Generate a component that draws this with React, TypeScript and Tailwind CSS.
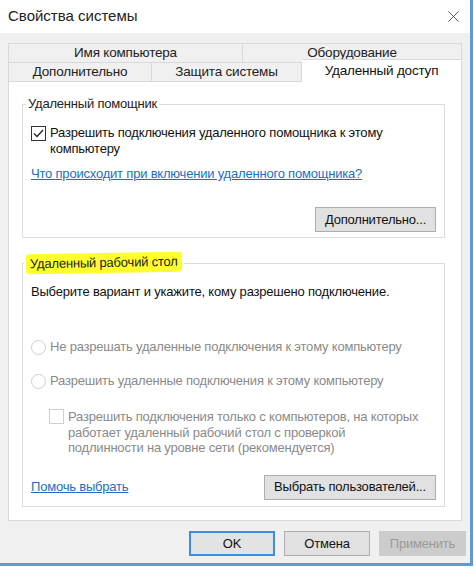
import { X } from "lucide-react";

const font = "font-['Liberation_Sans',Arial,sans-serif]";

function Btn({
  children,
  className = "",
  disabled = false,
  primary = false,
}: {
  children: React.ReactNode;
  className?: string;
  disabled?: boolean;
  primary?: boolean;
}) {
  return (
    <button
      className={`h-[25px] flex items-center justify-center text-[13px] tracking-[-0.2px] ${
        primary
          ? "border-2 border-[#3c8ddb] bg-[#e3e3e3] text-[#111]"
          : disabled
          ? "border border-[#cccccc] bg-[#cccccc] text-[#9a9a9a]"
          : "border border-[#adadad] bg-[#e1e1e1] text-[#111]"
      } ${className}`}
    >
      {children}
    </button>
  );
}

function Radio() {
  return (
    <span className="w-[15px] h-[15px] rounded-full border border-[#cfcfcf] bg-white shrink-0" />
  );
}

export default function App() {
  return (
    <div className={`w-[474px] h-[569px] bg-white ${font} text-[13px] tracking-[-0.2px] text-[#111]`}>
      <div className="w-[473px] h-[566px] flex flex-col border-r-[3px] border-b-[3px] border-[#5c9bd8]">
        {/* title bar */}
        <div className="h-[33px] bg-white flex items-center justify-between pl-[8px] pr-[7px]">
          <span className="text-[15px] tracking-normal text-[#222]">Свойства системы</span>
          <X size={19} strokeWidth={1} className="text-[#333]" />
        </div>

        {/* body */}
        <div className="flex-1 bg-[#f0f0f0] pt-[10px] pl-[8px] pr-[8px] flex flex-col">
          {/* tabs */}
          <div className="flex h-[19px] text-[#222] text-[13.5px]">
            <div className="w-[235px] border border-b-0 border-[#d9d9d9] flex items-center justify-center">
              Имя компьютера
            </div>
            <div className="w-[219px] border border-l-0 border-b-0 border-[#d9d9d9] flex items-center justify-center">
              Оборудование
            </div>
          </div>
          <div className="flex h-[20px] items-end text-[#222] text-[13.5px]">
            <div className="w-[144px] h-[20px] border border-[#d9d9d9] flex items-center justify-center">
              Дополнительно
            </div>
            <div className="w-[150px] h-[20px] border border-l-0 border-[#d9d9d9] flex items-center justify-center">
              Защита системы
            </div>
            <div className="w-[160px] h-[23px] -mt-[3px] bg-white border border-l-0 border-b-0 border-[#d9d9d9] flex items-start pt-[1px] justify-center text-[#111]">
              Удаленный доступ
            </div>
          </div>

          {/* panel */}
          <div className="w-[454px] h-[439px] bg-white border border-t-0 border-[#d9d9d9] pl-[13px] pr-[16px] pt-[14px] flex flex-col">
            <fieldset className="border border-[#dcdcdc] px-[8px] h-[142px]">
              <legend className="-ml-[5px] px-[2px] leading-[16px] text-[#222]">Удаленный помощник</legend>
              <div className="flex gap-[4px] mt-[13px] leading-[16px]">
                <span className="w-[15px] h-[15px] mt-[1px] border border-[#333] bg-white flex items-center justify-center shrink-0">
                  <svg width="11" height="9" viewBox="0 0 11 9">
                    <path d="M1 4.5 L4 7.5 L10 1" fill="none" stroke="#222" strokeWidth="1.3" />
                  </svg>
                </span>
                <span className="whitespace-nowrap">
                  Разрешить подключения удаленного помощника к этому
                  <br />
                  компьютеру
                </span>
              </div>
              <a className="block mt-[9px] leading-[16px] text-[#1a6fc4] underline">
                Что происходит при включении удаленного помощника?
              </a>
              <div className="flex justify-end mt-[25px]">
                <Btn className="w-[121px]">Дополнительно...</Btn>
              </div>
            </fieldset>

            <fieldset className="border border-[#dcdcdc] px-[8px] mt-[15px] h-[254px]">
              <legend className="-ml-[7px] px-[2px] leading-[16px]">
                <span className="inline-block bg-[#ffff2e] px-[4px] py-[2px] -rotate-1 text-[#222] rounded-[3px]">
                  Удаленный рабочий стол
                </span>
              </legend>
              <p className="mt-[11px] leading-[16px] text-[#111]">
                Выберите вариант и укажите, кому разрешено подключение.
              </p>
              <div className="flex items-center gap-[4px] mt-[39px] text-[#8a8a8a] leading-[16px]">
                <Radio />
                <span>Не разрешать удаленные подключения к этому компьютеру</span>
              </div>
              <div className="flex items-center gap-[4px] mt-[18px] text-[#8a8a8a] leading-[16px]">
                <Radio />
                <span>Разрешить удаленные подключения к этому компьютеру</span>
              </div>
              <div className="flex gap-[4px] mt-[20px] pl-[18px] text-[#8a8a8a] leading-[15.5px]">
                <span className="w-[15px] h-[15px] border border-[#cfcfcf] bg-white shrink-0" />
                <span className="whitespace-nowrap">
                  Разрешить подключения только с компьютеров, на которых
                  <br />
                  работает удаленный рабочий стол с проверкой
                  <br />
                  подлинности на уровне сети (рекомендуется)
                </span>
              </div>
              <div className="flex items-center justify-between mt-[19px]">
                <a className="text-[#1a6fc4] underline leading-[16px]">Помочь выбрать</a>
                <Btn className="w-[172px]">Выбрать пользователей...</Btn>
              </div>
            </fieldset>
          </div>

          {/* dialog buttons */}
          <div className="flex justify-end gap-[9px] mt-[10px] mr-[-4px]">
            <Btn primary className="w-[86px]">OK</Btn>
            <Btn className="w-[86px]">Отмена</Btn>
            <Btn disabled className="w-[87px]">Применить</Btn>
          </div>
        </div>
      </div>
    </div>
  );
}
